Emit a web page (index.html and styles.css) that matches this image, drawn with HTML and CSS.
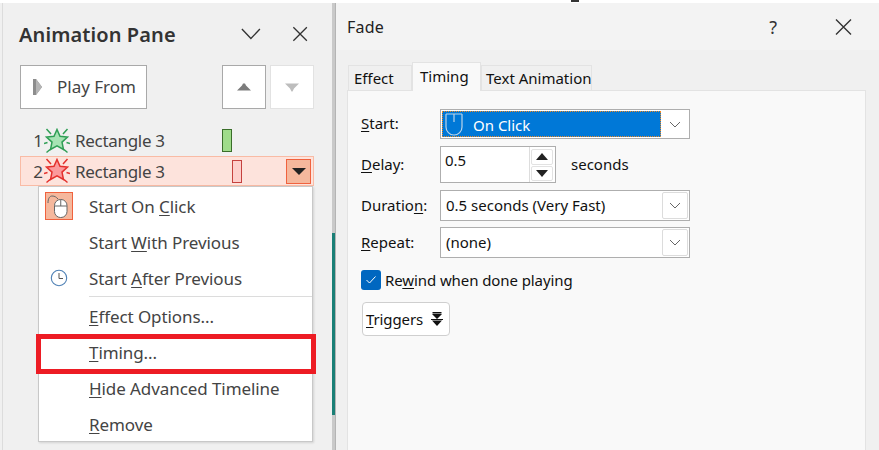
FILE: index.html
```html
<!DOCTYPE html>
<html lang="en">
<head>
<meta charset="utf-8">
<title>Animation Pane and Fade dialog</title>
<link rel="stylesheet" href="styles.css">
</head>
<body>
<div class="topstrip"><span class="topmark"></span></div>
<div class="screen">
  <section class="pane">
    <header class="pane-head">
      <h1 class="pane-title">Animation Pane</h1>
      <svg class="chev" width="22" height="14" viewBox="0 0 22 14"><path d="M1 1.500L11 12L21 1.500" fill="none" stroke="#333" stroke-width="1.500"/></svg>
      <svg class="close" width="18" height="18" viewBox="0 0 18 18"><path d="M1.500 1.500L16.500 16.500M16.500 1.500L1.500 16.500" fill="none" stroke="#333" stroke-width="1.400"/></svg>
    </header>
    <div class="pane-tools">
      <button class="play"><svg width="10" height="18" viewBox="0 0 10 18"><path d="M0 1L3 1L9 9L3 17L0 17Z" fill="#8d8d8d"/><path d="M3 1L9 9L3 17Z" fill="#b5b5b5"/></svg><span class="play-label">Play From</span></button>
      <button class="sq up"><svg width="14" height="8" viewBox="0 0 14 8"><path d="M0 7.500L5 2.500L6 .5L8 .5L9 2.500L14 7.500Z" fill="#7c7c7c"/></svg></button>
      <button class="sq down"><svg width="14" height="9" viewBox="0 0 14 9"><path d="M0 .5L14 .5L9 5.500L7.500 8.500L6.500 8.500L5 5.500Z" fill="#bdbdbd"/></svg></button>
    </div>
    <div class="row">
      <span class="num">1</span>
      <svg class="star" width="26" height="26" viewBox="0 0 26 26"><path d="M13 1.500L16 8.300L23.500 9.100L18 14.100L19.500 21.500L13 17.800L6.500 21.500L8 14.100L2.500 9.100L10 8.300Z" fill="#a6e3b4" stroke="#2f9e55" stroke-width="1.500"/><path d="M2.500 1L7 6M23.500 1L19 6M0 15.500L3.500 14.500M26 15.500L22.500 14.500M2.500 24.500L6 21.500M23.500 24.500L20 21.500" fill="none" stroke="#2f9e55" stroke-width="1.500"/></svg>
      <span class="rname">Rectangle 3</span>
      <span class="bar bar-green"></span>
    </div>
    <div class="row row-sel">
      <span class="num">2</span>
      <svg class="star" width="26" height="26" viewBox="0 0 26 26"><path d="M13 1.500L16 8.300L23.500 9.100L18 14.100L19.500 21.500L13 17.800L6.500 21.500L8 14.100L2.500 9.100L10 8.300Z" fill="#fb9a9c" stroke="#e4302c" stroke-width="1.500"/><path d="M2.500 1L7 6M23.500 1L19 6M0 15.500L3.500 14.500M26 15.500L22.500 14.500M2.500 24.500L6 21.500M23.500 24.500L20 21.500" fill="none" stroke="#e4302c" stroke-width="1.500"/></svg>
      <span class="rname">Rectangle 3</span>
      <span class="bar bar-red"></span>
      <span class="row-btn"><svg width="14" height="7" viewBox="0 0 14 7"><path d="M0 0H14L7 7Z" fill="#222"/></svg></span>
    </div>

    <div class="menu">
      <div class="mi">
        <span class="mi-ico mi-ico-on"><svg width="26" height="26" viewBox="0 0 26 26"><path d="M2 10C2 5 4 3 6 3C9 3 10 4 12 6" fill="none" stroke="#666" stroke-width="1"/><rect x="8.500" y="6.500" width="12.500" height="18" rx="6" fill="#fff" stroke="#666"/><path d="M14.750 6.500V13M8.500 13H21" stroke="#666" fill="none"/></svg></span>
        <span>Start On <u>C</u>lick</span>
      </div>
      <div class="mi"><span class="mi-ico"></span><span>Start <u>W</u>ith Previous</span></div>
      <div class="mi">
        <span class="mi-ico"><svg width="18" height="18" viewBox="0 0 18 18"><circle cx="9" cy="9" r="7.700" fill="none" stroke="#4f81b5" stroke-width="1.100"/><path d="M9 4V9.500H13" fill="none" stroke="#555" stroke-width="1"/></svg></span>
        <span>Start <u>A</u>fter Previous</span>
      </div>
      <div class="mi-sep"></div>
      <div class="mi"><span class="mi-ico"></span><span><u>E</u>ffect Options...</span></div>
      <div class="mi"><span class="mi-ico"></span><span><u>T</u>iming...</span></div>
      <div class="mi"><span class="mi-ico"></span><span><u>H</u>ide Advanced Timeline</span></div>
      <div class="mi"><span class="mi-ico"></span><span><u>R</u>emove</span></div>
      <div class="redbox"></div>
    </div>
  </section>

  <div class="gutter"><span class="gutter-teal"></span></div>

  <section class="dialog">
    <header class="dlg-title">
      <span class="dlg-name">Fade</span>
      <span class="dlg-help">?</span>
      <svg width="17" height="16" viewBox="0 0 17 16"><path d="M1 .5L16 15.500M16 .5L1 15.500" fill="none" stroke="#333" stroke-width="1.400"/></svg>
    </header>
    <div class="dlg-body">
      <nav class="tabs">
        <span class="tab tab-effect">Effect</span>
        <span class="tab tab-on">Timing</span>
        <span class="tab tab-text">Text Animation</span>
      </nav>
      <div class="panel">
        <div class="frow fr-start">
          <label class="flabel"><u>S</u>tart:</label>
          <div class="select select-start">
            <div class="sel-val sel-on">
              <svg width="18" height="23" viewBox="0 0 18 23"><path d="M1 1V14A8 8 0 0 0 17 14V1M9 1V9M1 1H17" fill="none" stroke="#b9d4ea" stroke-width="1.200"/></svg>
              <span class="sel-on-text">On Click</span>
            </div>
            <span class="sel-btn sel-btn-flat"><svg width="12" height="7" viewBox="0 0 12 7"><path d="M1 1L6 6L11 1" fill="none" stroke="#666"/></svg></span>
          </div>
        </div>
        <div class="frow fr-delay">
          <label class="flabel"><u>D</u>elay:</label>
          <div class="spin">
            <span class="spin-val">0.5</span>
            <div class="spin-btns">
              <span class="spin-btn"><svg width="12" height="7" viewBox="0 0 12 7"><path d="M0 7L6 0L12 7Z" fill="#222"/></svg></span>
              <span class="spin-btn"><svg width="12" height="7" viewBox="0 0 12 7"><path d="M0 0L6 7L12 0Z" fill="#222"/></svg></span>
            </div>
          </div>
          <span class="secs">seconds</span>
        </div>
        <div class="frow fr-dur">
          <label class="flabel">Duratio<u>n</u>:</label>
          <div class="select">
            <div class="sel-val"><span class="sel-text">0.5 seconds (Very Fast)</span></div>
            <span class="sel-btn"><svg width="12" height="7" viewBox="0 0 12 7"><path d="M1 1L6 6L11 1" fill="none" stroke="#666"/></svg></span>
          </div>
        </div>
        <div class="frow fr-rep">
          <label class="flabel"><u>R</u>epeat:</label>
          <div class="select">
            <div class="sel-val"><span class="sel-text">(none)</span></div>
            <span class="sel-btn"><svg width="12" height="7" viewBox="0 0 12 7"><path d="M1 1L6 6L11 1" fill="none" stroke="#666"/></svg></span>
          </div>
        </div>
        <div class="check-row">
          <span class="check"><svg width="12" height="10" viewBox="0 0 12 10"><path d="M1.500 5L4.500 8L10.500 1.500" fill="none" stroke="#fff" stroke-width="1"/></svg></span>
          <span class="check-label">Re<u>w</u>ind when done playing</span>
        </div>
        <button class="triggers"><span class="trig-label"><u>T</u>riggers</span><svg width="12" height="14" viewBox="0 0 12 14"><path d="M1.500 0H10.500V1.500H1.500ZM1 2H11L6 7ZM0 7H12V8H0ZM1 8.500H11L6 14Z" fill="#111"/></svg></button>
      </div>
    </div>
  </section>
</div>
</body>
</html>
```

FILE: styles.css
```css
* { box-sizing: border-box; }
html, body { margin: 0; padding: 0; }
body {
  width: 879px;
  height: 450px;
  overflow: hidden;
  background: #f0f0f0;
  font-family: "Noto Sans", "Open Sans", sans-serif;
  color: #444;
  position: relative;
}
.topstrip { height: 3px; background: #fff; position: relative; }
.topmark { position: absolute; left: 571px; top: 0; width: 8px; height: 2px; background: #333; }
.screen { display: flex; height: 447px; }

/* Animation pane */
.pane {
  width: 330px;
  position: relative;
  background: #f0f0f0;
  border-left: 1px solid #dcdcdc;
  margin-left: 2px;
  padding-left: 17px;
}
.pane-head { display: flex; align-items: center; height: 62px; padding-right: 24px; }
.pane-title { margin: 0 0 0 -1px; flex: 0 0 222px; font-size: 20px; font-weight: 600; color: #333; letter-spacing: 0.1px; white-space: nowrap; }
.close { margin-left: 31px; }
.pane-tools { display: flex; align-items: stretch; height: 44px; }
.play {
  width: 127px;
  display: flex;
  align-items: center;
  gap: 14px;
  padding: 0 0 0 12px;
  background: #fff;
  border: 1px solid #a9a9a9;
  font: inherit;
  font-size: 17px;
  color: #444;
  margin-right: 75px;
}
.play-label { padding-bottom: 1px; }
.sq { width: 44px; display: flex; align-items: center; justify-content: center; padding: 0; background: #fff; border: 1px solid #a9a9a9; }
.down { margin-left: 4px; border-color: #e2e2e2; }
.row {
  display: flex;
  align-items: center;
  height: 31px;
  margin-top: 16px;
  width: 294px;
  position: relative;
  font-size: 17px;
}
.row-sel {
  margin-top: 0;
  height: 30px;
  background: #fde3dc;
  border: 1px solid #f9bba5;
}
.num { width: 23px; text-align: right; }
.star { flex: none; margin: 0 5px 0 1px; }
.row-sel .num { width: 22px; }
.rname { letter-spacing: -0.3px; width: 147px; }
.bar { display: block; width: 10px; height: 23px; flex: none; }
.row .bar-green { background: #9fdc8a; border: 1px solid #3a6e2a; }
.row-sel .bar-red { background: #fdd0cc; border: 1px solid #c5413e; margin-left: 10px; }
.row-btn {
  margin-left: 44px;
  width: 25px;
  height: 25px;
  background: #f5b89d;
  border: 1px solid #f0623e;
  display: flex;
  align-items: center;
  justify-content: center;
}

/* Popup menu */
.menu {
  position: absolute;
  left: 35px;
  top: 183px;
  width: 275px;
  height: 256px;
  background: #fff;
  border: 1px solid #c8c8c8;
  box-shadow: 1px 1px 2px rgba(0,0,0,.12);
  font-size: 17px;
  padding-top: 1px;
  letter-spacing: -0.08px;
}
.mi { display: flex; align-items: center; height: 36px; }
.mi u { text-underline-offset: 2px; text-decoration-thickness: 1px; }
.mi-ico { flex: 0 0 28px; height: 28px; margin: 0 16px 0 6px; display: flex; align-items: center; justify-content: center; }
.mi-ico-on { background: #f5b89d; border: 1px solid #f0623e; }
.mi-sep { height: 1px; margin: 0 0 1px 50px; background: #dcdcdc; }
.redbox { position: absolute; left: -3px; top: 147px; width: 280px; height: 40px; border: 5px solid #ed1c24; }

/* Gutter */
.gutter { width: 3px; position: relative; background: #c9c9c9; }
.gutter-teal { position: absolute; left: 0; top: 230px; width: 3px; height: 182px; background: #1a7f76; }

/* Dialog */
.dialog { flex: 1; border-left: 1px solid #b4b4b4; display: flex; flex-direction: column; background: #f0f0f0; color: #111; font-size: 15px; }
.dlg-title { height: 47px; background: #f3f3f3; display: flex; align-items: center; padding: 0 27px 0 11px; }
.dlg-name { flex: 1; font-size: 16px; color: #222; letter-spacing: 0.2px; }
.dlg-help { font-size: 18px; margin-right: 58px; color: #333; }
.dlg-body { padding: 12px 13px 0 11px; flex: 1; display: flex; flex-direction: column; }
.tabs { display: flex; align-items: flex-end; height: 28px; padding-left: 1px; }
.tab { height: 25px; display: flex; align-items: center; padding-left: 5px; border: 1px solid #e3e3e3; border-bottom: 0; background: #f0f0f0; white-space: nowrap; }
.tab-effect { width: 64px; }
.tab-on { width: 69px; height: 29px; background: #f9f9f9; padding-left: 7px; padding-bottom: 3px; margin-bottom: -1px; position: relative; z-index: 1; }
.tab-text { width: 111px; padding-left: 4px; }
.panel { flex: 1; background: #f9f9f9; border: 1px solid #e3e3e3; border-bottom: 0; padding: 18px 0 0 13px; }
.frow { display: flex; align-items: center; }
.frow u, .check-row u, .triggers u { text-underline-offset: 2px; text-decoration-thickness: 1px; }
.flabel { width: 79px; flex: none; padding-bottom: 2px; }
.fr-delay { margin-top: 7px; }
.fr-dur { margin-top: 7px; }
.fr-rep { margin-top: 6px; }
.select { width: 250px; height: 31px; display: flex; background: #fff; border: 1px solid #aeaeae; padding: 1px; }
.select-start { height: 30px; }
.sel-val { flex: 1; display: flex; align-items: center; padding-left: 4px; }
.sel-text { padding-bottom: 1px; }
.sel-on { background: #0078d7; color: #fff; outline: 1px dotted #f08a24; outline-offset: -1px; gap: 10px; padding-left: 3px; }
.sel-on-text { padding-top: 1px; }
.sel-btn { width: 26px; margin-left: 1px; display: flex; align-items: center; justify-content: center; border: 1px solid #dcdcdc; border-radius: 2px; }
.sel-btn-flat { border-color: transparent; }
.spin { width: 116px; height: 37px; display: flex; background: #fff; border: 1px solid #aeaeae; }
.spin-val { flex: 1; padding: 3px 0 0 4px; }
.spin-btns { width: 26px; display: flex; flex-direction: column; gap: 1px; padding: 2px 2px 1px 1px; border-left: 1px solid #ddd; }
.spin-btn { flex: 1; display: flex; align-items: center; justify-content: center; border: 1px solid #e2e2e2; border-radius: 2px; }
.secs { margin-left: 15px; padding-bottom: 2px; }
.check-row { display: flex; align-items: center; margin-top: 11px; gap: 4px; height: 21px; }
.check-label { letter-spacing: -0.09px; }
.check { width: 20px; height: 20px; background: #0067c0; border-radius: 3px; display: flex; align-items: center; justify-content: center; }
.triggers {
  margin: 12px 0 0 1px;
  width: 88px;
  height: 34px;
  display: flex;
  align-items: center;
  gap: 8px;
  padding: 0 0 0 3px;
  background: #fff;
  border: 1px solid #cfcfcf;
  border-radius: 4px;
  font: inherit;
  color: #111;
}
.trig-label { letter-spacing: -0.1px; padding-bottom: 1px; }
```
